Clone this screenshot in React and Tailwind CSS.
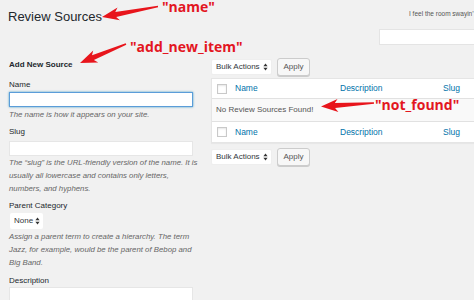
import React from 'react';

// red annotation arrow: tail (x1,y1) -> tip (x2,y2)
const arrowPoints = (x1, y1, x2, y2, head = 14, hw = 6.5, sw0 = 0.8, sw1 = 2.5) => {
  const dx = x2 - x1;
  const dy = y2 - y1;
  const len = Math.hypot(dx, dy);
  const ux = dx / len;
  const uy = dy / len;
  const nx = -uy;
  const ny = ux;
  const bx = x2 - ux * head;
  const by = y2 - uy * head;
  const wx = x2 - ux * (head + 3);
  const wy = y2 - uy * (head + 3);
  const pts = [
    [x1 + nx * sw0, y1 + ny * sw0],
    [bx + nx * sw1, by + ny * sw1],
    [wx + nx * hw, wy + ny * hw],
    [x2, y2],
    [wx - nx * hw, wy - ny * hw],
    [bx - nx * sw1, by - ny * sw1],
    [x1 - nx * sw0, y1 - ny * sw0],
  ];
  return pts.map(p => p.map(v => v.toFixed(1)).join(',')).join(' ');
};

const SelectArrows = () => (
  <svg width="5" height="8" viewBox="0 0 5 8" className="shrink-0">
    <path d="M2.5 0.5 L4.6 3.3 L0.4 3.3 Z" fill="#333" />
    <path d="M2.5 7.5 L4.6 4.7 L0.4 4.7 Z" fill="#333" />
  </svg>
);

const Checkbox = () => (
  <div className="w-[10px] h-[10px] bg-white border border-[#c9c9c9] shadow-[inset_0_1px_2px_rgba(0,0,0,0.1)]" />
);

const BulkBar = () => (
  <div className="flex items-center gap-[5px]">
    <div className="w-[61px] h-[16px] bg-white border border-[#eee] rounded-[2px] flex items-center justify-between pl-[4px] pr-[3px] text-[8px] text-[#32373c]">
      <span>Bulk Actions</span>
      <SelectArrows />
    </div>
    <button className="w-[33px] h-[18px] bg-[#f7f7f7] border border-[#cccccc] rounded-[3px] shadow-[0_1px_0_#ccc] text-[8px] text-[#555]">
      Apply
    </button>
  </div>
);

const TableRow = ({ className = '' }) => (
  <div className={`grid grid-cols-[23px_105px_103px_1fr] items-center text-[8.5px] text-[#0073aa] ${className}`}>
    <div className="pl-[5px]"><Checkbox /></div>
    <span>Name</span>
    <span>Description</span>
    <span>Slug</span>
  </div>
);

const App = () => {
  return (
    <div className="relative w-[474px] h-[300px] overflow-hidden bg-[#f1f1f1] font-['Liberation_Sans',Arial,sans-serif] text-[#23282d]">
      <div className="flex items-start">
        <h1 className="ml-[8px] mt-[9px] text-[13px] leading-[16px] text-[#23282d]">Review Sources</h1>
        <div className="ml-auto mt-[10px] w-[65px] overflow-hidden whitespace-nowrap text-[6.5px] leading-[8px] text-[#555]">
          I feel the room swayin’ while the band's still playin'
        </div>
      </div>

      <div className="ml-[379px] mt-[4px] w-[110px] h-[16px] bg-white border border-[#e4e4e4]" />

      <div className="flex mt-[13px]">
        {/* left: add form */}
        <div className="ml-[9px] w-[194px] shrink-0">
          <h2 className="mt-[1px] text-[8px] leading-[12px] font-bold text-[#23282d]">Add New Source</h2>

          <label className="block mt-[8px] text-[8px] leading-[12px]">Name</label>
          <div className="mt-[1px] w-[184px] h-[15px] bg-white border border-[#5b9dd9] shadow-[0_0_2px_rgba(30,140,190,0.8)]" />
          <p className="mt-[2px] text-[7.8px] leading-[12px] italic text-[#666]">The name is how it appears on your site.</p>

          <label className="block mt-[5px] text-[8px] leading-[12px]">Slug</label>
          <div className="mt-[3px] w-[184px] h-[15px] bg-white border border-[#e6e6e6]" />
          <p className="mt-0 text-[7.8px] leading-[13px] italic text-[#666] whitespace-nowrap">
            The “slug” is the URL-friendly version of the name. It is<br />
            usually all lowercase and contains only letters,<br />
            numbers, and hyphens.
          </p>

          <label className="block mt-[5px] text-[8px] leading-[12px]">Parent Category</label>
          <div className="mt-[1px] ml-[1px] w-[33px] h-[16px] bg-white rounded-[2px] flex items-center justify-between pl-[4px] pr-[3px] text-[8px] text-[#32373c]">
            <span>None</span>
            <SelectArrows />
          </div>
          <p className="mt-[1px] text-[7.8px] leading-[13px] italic text-[#666] whitespace-nowrap">
            Assign a parent term to create a hierarchy. The term<br />
            Jazz, for example, would be the parent of Bebop and<br />
            Big Band.
          </p>

          <label className="block mt-[6px] text-[8px] leading-[12px]">Description</label>
          <div className="mt-0 w-[184px] h-[30px] bg-white border border-[#e6e6e6]" />
        </div>

        {/* right: list table */}
        <div className="ml-[8px] flex-1 min-w-0">
          <BulkBar />
          <div className="mt-[2px] w-[280px] bg-white border border-[#e5e5e5] shadow-[0_1px_1px_rgba(0,0,0,0.04)]">
            <TableRow className="h-[20px] border-b border-[#e1e1e1]" />
            <div className="h-[22px] flex items-center pl-[4px] bg-[#f9f9f9] text-[8px] text-[#555]">
              No Review Sources Found!
            </div>
            <TableRow className="h-[21px] border-t border-[#e1e1e1]" />
          </div>
          <div className="mt-[5px]"><BulkBar /></div>
        </div>
      </div>

      {/* annotations */}
      <svg className="absolute inset-0 pointer-events-none" width="474" height="300">
        <polygon points={arrowPoints(158, 6.5, 102, 17)} fill="#e8151c" />
        <polygon points={arrowPoints(126, 44, 80, 63)} fill="#e8151c" />
        <polygon points={arrowPoints(374, 103, 321, 106.5)} fill="#e8151c" />
      </svg>
      <span className="absolute left-[162px] top-0 font-['Open_Sans',sans-serif] font-bold text-[14px] leading-[14px] text-[#e3161f]">"name"</span>
      <span className="absolute left-[130px] top-[40px] font-['Open_Sans',sans-serif] font-bold text-[14px] leading-[14px] text-[#e3161f]">"add_new_item"</span>
      <span className="absolute left-[375px] top-[98px] font-['Open_Sans',sans-serif] font-bold text-[14px] leading-[14px] text-[#e3161f]">"not_found"</span>
    </div>
  );
};

export default App;
